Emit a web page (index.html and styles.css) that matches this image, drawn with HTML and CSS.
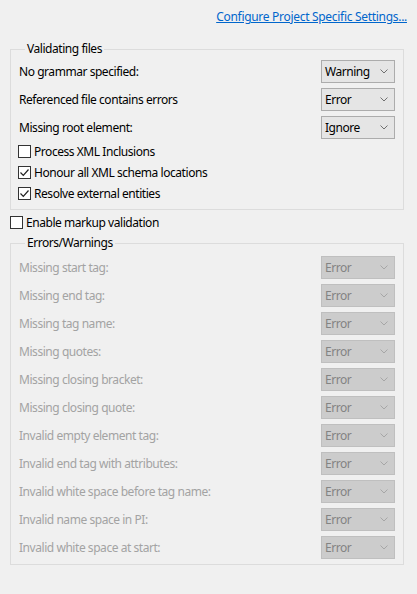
FILE: index.html
```html
<!DOCTYPE html>
<html lang="en">
<head>
<meta charset="UTF-8">
<title>XML Validation</title>
<link rel="stylesheet" href="styles.css">
</head>
<body>

<div class="top-link">
    <a href="#">Configure Project Specific Settings...</a>
</div>

<!-- Validating files -->
<fieldset class="group group-files">
    <legend>Validating files</legend>
    <div class="row">
        <span class="label">No grammar specified:</span>
        <div class="combo"><span>Warning</span><svg class="arrow" width="8" height="5" viewBox="0 0 8 5"><polyline points="0.5,0.5 4,4 7.5,0.5"/></svg></div>
    </div>
    <div class="row">
        <span class="label">Referenced file contains errors</span>
        <div class="combo"><span>Error</span><svg class="arrow" width="8" height="5" viewBox="0 0 8 5"><polyline points="0.5,0.5 4,4 7.5,0.5"/></svg></div>
    </div>
    <div class="row">
        <span class="label">Missing root element:</span>
        <div class="combo"><span>Ignore</span><svg class="arrow" width="8" height="5" viewBox="0 0 8 5"><polyline points="0.5,0.5 4,4 7.5,0.5"/></svg></div>
    </div>
    <div class="checks">
        <label class="check"><span class="box"></span>Process XML Inclusions</label>
        <label class="check"><span class="box checked"><svg width="11" height="11" viewBox="0 0 11 11"><polyline points="1.5,5.5 4.3,8.3 9.5,2.5"/></svg></span>Honour all XML schema locations</label>
        <label class="check"><span class="box checked"><svg width="11" height="11" viewBox="0 0 11 11"><polyline points="1.5,5.5 4.3,8.3 9.5,2.5"/></svg></span>Resolve external entities</label>
    </div>
</fieldset>

<label class="check markup"><span class="box"></span>Enable markup validation</label>

<!-- Errors/Warnings (disabled until markup validation is on) -->
<fieldset class="group group-errors">
    <legend>Errors/Warnings</legend>
    <div class="rows" id="errorRows"></div>
</fieldset>

<script>
const errorRows = document.getElementById("errorRows");
const names = [
    "Missing start tag:",
    "Missing end tag:",
    "Missing tag name:",
    "Missing quotes:",
    "Missing closing bracket:",
    "Missing closing quote:",
    "Invalid empty element tag:",
    "Invalid end tag with attributes:",
    "Invalid white space before tag name:",
    "Invalid name space in PI:",
    "Invalid white space at start:"
];

names.forEach(name => {
    const row = document.createElement("div");
    row.className = "row disabled";
    row.innerHTML = `<span class="label">${name}</span>
        <div class="combo"><span>Error</span><svg class="arrow" width="8" height="5" viewBox="0 0 8 5"><polyline points="0.5,0.5 4,4 7.5,0.5"/></svg></div>`;
    errorRows.appendChild(row);
});
</script>
</body>
</html>
```

FILE: styles.css
```css
body {
    margin: 0;
    padding: 0 15px 0 10px;
    background: #f0f0f0;
    font-family: "Noto Sans", "Liberation Sans", sans-serif;
    font-size: 12px;
    letter-spacing: -0.45px;
    color: #000;
}
.top-link {
    text-align: right;
    padding-top: 9px;
    height: 32px;
    line-height: 16px;
    margin-right: -5px;
    letter-spacing: -0.3px;
}
.top-link a {
    color: #0066cc;
    text-decoration: underline;
}
.group {
    margin: 0;
    padding: 0 8px 5px 7px;
    border: 1px solid #dcdcdc;
    min-width: 0;
}
.group legend {
    padding: 0 2px;
    margin-left: 7px;
    line-height: 16px;
}
.group-files {
    width: 377px;
}
.group-files > .row:first-of-type {
    margin-top: 3px;
}
.group-errors {
    width: 377px;
    margin-top: 2px;
    padding-bottom: 5px;
}
.group-errors .rows {
    padding-top: 5px;
}
.row {
    display: flex;
    align-items: center;
    justify-content: space-between;
    height: 23px;
    margin-bottom: 5px;
}
.rows .row:last-child {
    margin-bottom: 0;
}
.label {
    padding-left: 1px;
}
.combo {
    box-sizing: border-box;
    width: 74px;
    height: 23px;
    border: 1px solid #acacac;
    background: #e5e5e5;
    display: flex;
    align-items: center;
    justify-content: space-between;
    padding: 0 6px 0 3px;
}
.combo .arrow {
    fill: none;
    stroke: #707070;
    stroke-width: 1;
}
.row.disabled .label {
    color: #a3a3a3;
}
.row.disabled .combo {
    background: #cccccc;
    border-color: #bfbfbf;
    color: #838383;
}
.row.disabled .combo .arrow {
    stroke: #a6a6a6;
}
.checks {
    margin-top: -3px;
}
.check {
    display: flex;
    align-items: center;
    height: 21px;
}
.box {
    box-sizing: border-box;
    width: 13px;
    height: 13px;
    border: 1px solid #333;
    background: #fff;
    margin-right: 3px;
    display: flex;
    align-items: center;
    justify-content: center;
}
.box svg {
    fill: none;
    stroke: #222;
    stroke-width: 1.2;
}
.markup {
    margin-top: 2px;
}
```
